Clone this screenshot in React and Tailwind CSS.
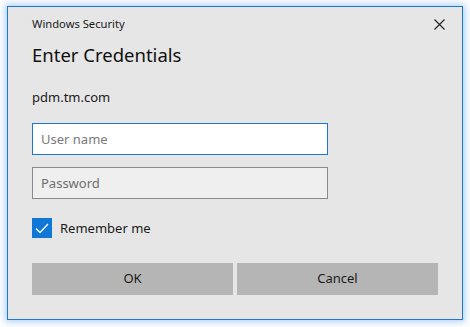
import React from 'react'

export default function App() {
    return (
        <div className="w-[470px] h-[327px] bg-white pl-[7px] pt-[6px]" style={{ fontFamily: '"Noto Sans", "Open Sans", sans-serif' }}>
            {/* Dialog */}
            <div className="w-[456px] h-[314px] bg-[#e6e6e6] border border-[#1c78d0] shadow-[0_0_7px_2px_rgba(110,170,235,0.55)] px-6 flex flex-col text-[#1a1a1a]">
                {/* Title bar */}
                <div className="flex items-center justify-between pt-[9px]">
                    <span className="text-[11.2px] leading-4">Windows Security</span>
                    <svg width="11" height="11" viewBox="0 0 11 11" className="-mr-[7px]">
                        <path d="M0.5 0.5 L10.5 10.5 M10.5 0.5 L0.5 10.5" stroke="#222" strokeWidth="1.1" />
                    </svg>
                </div>

                <h1 className="mt-[9px] text-[18.5px] leading-7 text-[#111]">Enter Credentials</h1>

                <p className="mt-[18px] text-[13px] leading-5">pdm.tm.com</p>

                <input
                    type="text"
                    placeholder="User name"
                    className="mt-4 w-[296px] h-[32px] bg-white border border-[#1a78d0] px-2 text-[13px] placeholder:text-[#7a7a7a] outline-none"
                />
                <input
                    type="password"
                    placeholder="Password"
                    className="mt-3 w-[296px] h-[32px] bg-[#efefef] border border-[#8a8a8a] px-2 text-[13px] placeholder:text-[#6e6e6e] outline-none"
                />

                {/* Remember me */}
                <label className="mt-[19px] flex items-center gap-2 h-5">
                    <span className="w-5 h-5 bg-[#0f78d7] flex items-center justify-center">
                        <svg width="14" height="11" viewBox="0 0 14 11">
                            <path d="M1 5.5 L5 9.5 L13 1" fill="none" stroke="white" strokeWidth="1.3" />
                        </svg>
                    </span>
                    <span className="text-[13px] leading-5">Remember me</span>
                </label>

                {/* Buttons */}
                <div className="mt-[25px] flex gap-1">
                    <button className="flex-1 h-[32px] bg-[#b5b5b5] text-[13px]">OK</button>
                    <button className="flex-1 h-[32px] bg-[#b5b5b5] text-[13px]">Cancel</button>
                </div>
            </div>
        </div>
    )
}
